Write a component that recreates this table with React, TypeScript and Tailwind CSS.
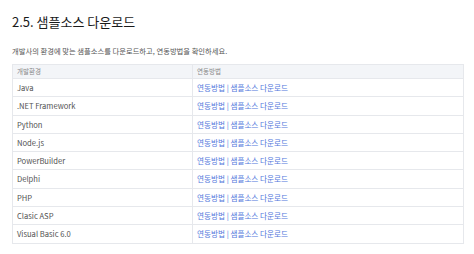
const rows = [
  'Java',
  '.NET Framework',
  'Python',
  'Node.js',
  'PowerBuilder',
  'Delphi',
  'PHP',
  'Clasic ASP',
  'Visual Basic 6.0',
];

export default function App() {
  return (
    <div
      className="w-[474px] h-[254px] bg-white px-3 pt-[12px] overflow-hidden"
      style={{ fontFamily: '"Noto Sans CJK KR", "Noto Sans", sans-serif' }}
    >
      <h2 className="text-[13px] leading-[20px] text-[#1a1a1a] font-normal">2.5. 샘플소스 다운로드</h2>
      <p className="mt-[13px] text-[7.3px] leading-[12px] text-[#555]">
        개발사의 환경에 맞는 샘플소스를 다운로드하고, 연동방법을 확인하세요.
      </p>
      <table className="mt-[7px] w-[452px] border-collapse border border-[#e6e8ec] text-[7.6px]">
        <thead>
          <tr className="bg-[#f3f5f8] h-[14px]">
            <th className="w-[180px] border-r border-[#e6e8ec] px-1 text-left font-normal text-[6.5px] text-[#888]">
              개발환경
            </th>
            <th className="px-1 text-left font-normal text-[6.5px] text-[#888]">연동방법</th>
          </tr>
        </thead>
        <tbody>
          {rows.map((name) => (
            <tr key={name} className="h-[18.3px] border-t border-[#e6e8ec]">
              <td className="border-r border-[#e6e8ec] px-1 text-[#525252]">{name}</td>
              <td className="px-1 text-[#5277dc]">
                <a href="#">연동방법</a> | <a href="#">샘플소스 다운로드</a>
              </td>
            </tr>
          ))}
        </tbody>
      </table>
    </div>
  );
}
